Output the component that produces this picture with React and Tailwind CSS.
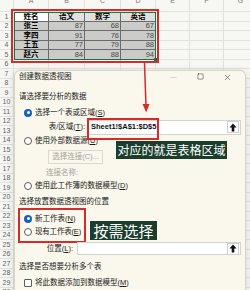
import { Minus, Square, X } from 'lucide-react';

const COLS = [
  { name: 'A', w: 'w-[35px]' },
  { name: 'B', w: 'w-[36px]' },
  { name: 'C', w: 'w-[36px]' },
  { name: 'D', w: 'w-[35px]' },
  { name: 'E', w: 'w-[34px]' },
  { name: 'F', w: 'w-[34px]' },
  { name: 'G', w: 'w-[34px]' },
];

const TABLE = [
  ['姓名', '语文', '数学', '英语'],
  ['张三', '87', '68', '67'],
  ['李四', '91', '76', '78'],
  ['王五', '77', '79', '88'],
  ['赵六', '84', '88', '94'],
];

const ROWS = Array.from({ length: 30 }, (_, i) => i + 1);

function Cell({ row, col }) {
  const w = COLS[col].w;
  if (row <= 5 && col <= 3) {
    const value = TABLE[row - 1][col];
    const isHead = row === 1;
    const isActive = isHead && col === 0;
    const isNum = !isHead && col > 0;
    return (
      <div
        className={`${w} shrink-0 h-full flex items-center border-r border-b border-[#6b6b6b] text-[7.5px] leading-none ${
          isActive ? 'bg-white' : isHead ? 'bg-[#e0e0de]' : 'bg-[#cbcbc9]'
        } ${isNum ? 'justify-end pr-[1px] text-[#4a4a4a]' : 'justify-center font-bold text-black'}`}
      >
        {value}
      </div>
    );
  }
  return <div className={`${w} shrink-0 h-full border-r border-b border-[#e3e1db]`} />;
}

function Radio({ on }) {
  return on ? (
    <span className="w-[8px] h-[8px] shrink-0 rounded-full bg-[#1162c0] flex items-center justify-center">
      <span className="w-[3px] h-[3px] rounded-full bg-white" />
    </span>
  ) : (
    <span className="w-[8px] h-[8px] shrink-0 rounded-full border border-[#5c5c5c] bg-white" />
  );
}

function UpButton() {
  return (
    <span className="w-[12px] h-[12px] mr-[1px] shrink-0 border border-[#cfcfcf] bg-white flex items-center justify-center">
      <svg width="8" height="9" viewBox="0 0 8 9">
        <path d="M4 0.5 L7.5 4.5 H5.3 V8.5 H2.7 V4.5 H0.5 Z" fill="#111" />
      </svg>
    </span>
  );
}

function Dialog() {
  return (
    <div className="absolute left-[14px] top-[70px] w-[232px] h-[230px] overflow-hidden whitespace-nowrap rounded-t-[6px] border border-[#d6d3c9] bg-[#faf7ec] shadow-[0_2px_8px_rgba(0,0,0,0.15)] text-[7.5px] leading-none text-[#1b1b1b]">
      <div className="flex flex-col px-[4px] -mt-px">
        <div className="h-[14px] flex items-center">
          <span className="flex-1">创建数据透视图</span>
          <div className="flex">
            <span className="w-[27px] flex justify-center">
              <Minus size={9} strokeWidth={1.2} color="#b0aea8" />
            </span>
            <span className="w-[27px] flex justify-center">
              <Square size={7} strokeWidth={1.8} color="#3a3a3a" />
            </span>
            <span className="w-[27px] flex justify-center">
              <X size={9} strokeWidth={1.4} color="#3a3a3a" />
            </span>
          </div>
        </div>

        <div className="mt-[6px] h-[13px] flex items-center">请选择要分析的数据</div>

        <div className="mt-[3px] h-[13px] flex items-center gap-[3px] pl-[5px]">
          <Radio on />
          <span>
            选择一个表或区域(<span className="underline">S</span>)
          </span>
        </div>

        <div className="h-[16px] flex items-center">
          <span className="w-[66px] text-right">
            表/区域(<span className="underline">T</span>):
          </span>
          <div className="relative ml-[3px] flex-1 h-[15px] flex items-center bg-white border border-[#d4d2cc]">
            <span className="flex-1 pl-[2px] font-semibold text-[7.5px] text-[#111]">Sheet1!$A$1:$D$5</span>
            <UpButton />
            <div className="absolute -left-[2px] -top-[3px] w-[72px] h-[22px] border-2 border-[#d42b2b]" />
          </div>
        </div>

        <div className="h-[12px] flex items-center gap-[3px] pl-[5px]">
          <Radio />
          <span>
            使用外部数据源(<span className="underline">U</span>)
          </span>
        </div>

        <div className="h-[19px] flex items-center">
          <span className="ml-[29px] w-[55px] h-[14px] flex items-center justify-center border border-[#dcd9d0] text-[#a3a19b]">
            选择连接(C)...
          </span>
        </div>

        <div className="h-[14px] flex items-center pl-[27px] text-[#a3a19b]">连接名称:</div>

        <div className="h-[12px] flex items-center gap-[3px] pl-[5px]">
          <Radio />
          <span>
            使用此工作簿的数据模型(<span className="underline">D</span>)
          </span>
        </div>

        <div className="mt-[3px] h-[13px] flex items-center">选择放置数据透视图的位置</div>

        <div className="-ml-[1px] w-[68px] border-2 border-[#d42b2b] pl-[4px] pt-[2px] pb-[3px] flex flex-col">
          <div className="h-[13px] flex items-center gap-[3px]">
            <Radio on />
            <span>
              新工作表(<span className="underline">N</span>)
            </span>
          </div>
          <div className="h-[13px] flex items-center gap-[3px]">
            <Radio />
            <span className="tracking-[-0.2px]">
              现有工作表(<span className="underline">E</span>)
            </span>
          </div>
        </div>

        <div className="-mt-[1px] h-[13px] flex items-center">
          <span className="w-[54px] text-right">
            位置(<span className="underline">L</span>):
          </span>
          <div className="ml-[4px] flex-1 h-[13px] flex items-center bg-white border border-[#d4d2cc]">
            <span className="flex-1" />
            <UpButton />
          </div>
        </div>

        <div className="mt-[5px] h-[13px] flex items-center">选择是否想要分析多个表</div>

        <div className="mt-[4px] h-[12px] flex items-center gap-[3px] pl-[5px]">
          <span className="w-[8px] h-[8px] shrink-0 border border-[#5c5c5c] bg-white rounded-[1px]" />
          <span>
            将此数据添加到数据模型(<span className="underline">M</span>)
          </span>
        </div>
      </div>
    </div>
  );
}

export default function App() {
  return (
    <div className="relative w-[250px] h-[290px] overflow-hidden bg-[#f7f7f4] font-['Liberation_Sans','Noto_Sans_CJK_SC',sans-serif]">
      <div className="flex flex-col">
        <div className="flex h-[12px] overflow-hidden">
          <div className="w-[14px] shrink-0 border-r border-b border-[#e3e1db]" />
          {COLS.map((c) => (
            <div
              key={c.name}
              className={`${c.w} shrink-0 flex justify-center border-r border-b border-[#e3e1db] text-[7px] leading-none text-[#7a7a7a]`}
            >
              <span className="-mt-[3px]">{c.name}</span>
            </div>
          ))}
        </div>
        {ROWS.map((r) => (
          <div key={r} className="flex h-[9.5px]">
            <div className="w-[14px] shrink-0 flex items-center justify-center border-r border-b border-[#e3e1db] text-[7px] leading-none text-[#666]">
              {r}
            </div>
            {COLS.map((c, i) => (
              <Cell key={c.name} row={r} col={i} />
            ))}
          </div>
        ))}
      </div>

      {/* selection + red highlight around the source table */}
      <div className="absolute left-[14px] top-[12px] w-[142px] h-[48px] border border-[#1e7145]">
        <span className="absolute -right-[2px] -bottom-[2px] w-[3px] h-[3px] bg-[#1e7145]" />
      </div>
      <div className="absolute left-[11px] top-[9px] w-[148px] h-[54px] border-2 border-[#d42b2b]" />

      <Dialog />

      <svg className="absolute left-0 top-0 pointer-events-none" width="250" height="290">
        <line x1="144.5" y1="63" x2="146" y2="106" stroke="#d42b2b" strokeWidth="1.5" />
        <polygon points="142.5,104 149.5,104 146.2,112.5" fill="#d42b2b" />
      </svg>

      <div className="absolute left-[116px] top-[141px] w-[111px] h-[18px] flex items-center justify-center bg-[#1b3e2c] text-white text-[12px] leading-none font-['Noto_Sans_CJK_SC',sans-serif]">
        对应的就是表格区域
      </div>
      <div className="absolute left-[90px] top-[221px] w-[67px] h-[19px] flex items-center justify-center bg-[#1b3e2c] text-white text-[15px] leading-none font-['Noto_Sans_CJK_SC',sans-serif]">
        按需选择
      </div>
    </div>
  );
}
